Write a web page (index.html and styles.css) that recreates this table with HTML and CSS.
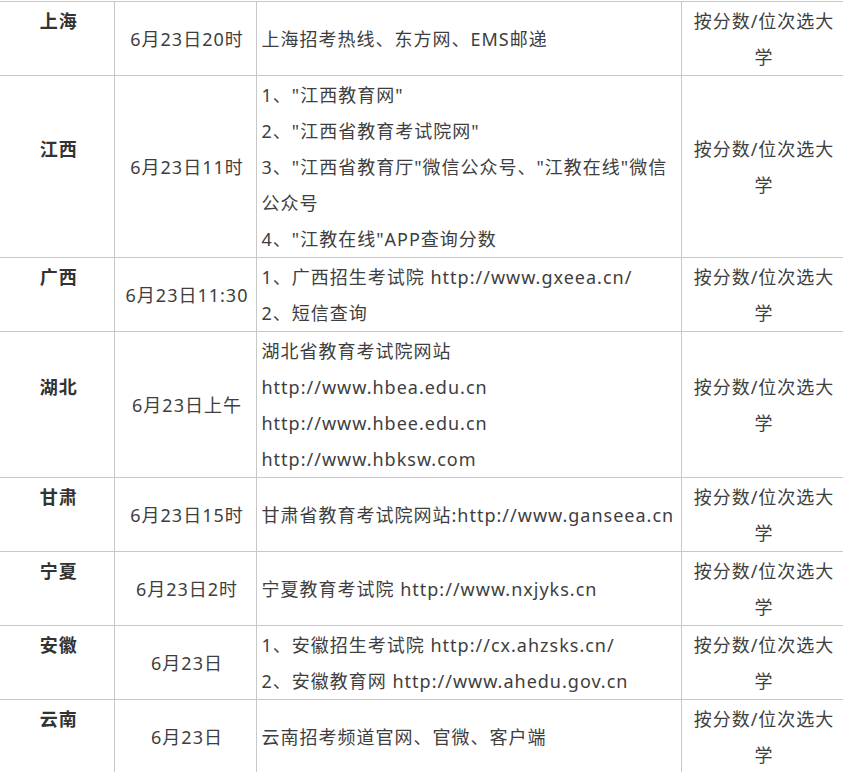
FILE: index.html
```html
<!DOCTYPE html>
<html lang="zh-CN">
<head>
<meta charset="utf-8">
<title>高考查分</title>
<link rel="stylesheet" href="styles.css">
</head>
<body>
<table class="score-table">
  <colgroup>
    <col class="c-prov">
    <col class="c-time">
    <col class="c-src">
    <col class="c-res">
  </colgroup>
  <tbody>
    <tr>
      <td class="prov"><div class="prov-name">上海</div><div class="prov-gap"></div></td>
      <td class="time">6月23日20时</td>
      <td class="src">上海招考热线、东方网、EMS邮递</td>
      <td class="res">按分数/位次选大学</td>
    </tr>
    <tr>
      <td class="prov"><div class="prov-name">江西</div><div class="prov-gap"></div></td>
      <td class="time">6月23日11时</td>
      <td class="src">
        <div>1、"江西教育网"</div>
        <div>2、"江西省教育考试院网"</div>
        <div>3、"江西省教育厅"微信公众号、"江教在线"微信公众号</div>
        <div>4、"江教在线"APP查询分数</div>
      </td>
      <td class="res">按分数/位次选大学</td>
    </tr>
    <tr>
      <td class="prov"><div class="prov-name">广西</div><div class="prov-gap"></div></td>
      <td class="time">6月23日11:30</td>
      <td class="src">
        <div>1、广西招生考试院 http://www.gxeea.cn/</div>
        <div>2、短信查询</div>
      </td>
      <td class="res">按分数/位次选大学</td>
    </tr>
    <tr>
      <td class="prov"><div class="prov-name">湖北</div><div class="prov-gap"></div></td>
      <td class="time">6月23日上午</td>
      <td class="src">
        <div>湖北省教育考试院网站</div>
        <div>http://www.hbea.edu.cn</div>
        <div>http://www.hbee.edu.cn</div>
        <div>http://www.hbksw.com</div>
      </td>
      <td class="res">按分数/位次选大学</td>
    </tr>
    <tr>
      <td class="prov"><div class="prov-name">甘肃</div><div class="prov-gap"></div></td>
      <td class="time">6月23日15时</td>
      <td class="src">甘肃省教育考试院网站:http://www.ganseea.cn</td>
      <td class="res">按分数/位次选大学</td>
    </tr>
    <tr>
      <td class="prov"><div class="prov-name">宁夏</div><div class="prov-gap"></div></td>
      <td class="time">6月23日2时</td>
      <td class="src">宁夏教育考试院 http://www.nxjyks.cn</td>
      <td class="res">按分数/位次选大学</td>
    </tr>
    <tr>
      <td class="prov"><div class="prov-name">安徽</div><div class="prov-gap"></div></td>
      <td class="time">6月23日</td>
      <td class="src">
        <div>1、安徽招生考试院 http://cx.ahzsks.cn/</div>
        <div>2、安徽教育网 http://www.ahedu.gov.cn</div>
      </td>
      <td class="res">按分数/位次选大学</td>
    </tr>
    <tr>
      <td class="prov"><div class="prov-name">云南</div><div class="prov-gap"></div></td>
      <td class="time">6月23日</td>
      <td class="src">云南招考频道官网、官微、客户端</td>
      <td class="res">按分数/位次选大学</td>
    </tr>
  </tbody>
</table>
</body>
</html>
```

FILE: styles.css
```css
html, body {
  margin: 0;
  padding: 0;
  background: #ffffff;
}

body {
  font-family: "Noto Sans", "Noto Sans CJK SC", sans-serif;
  font-size: 18px;
  letter-spacing: 1px;
  line-height: 36px;
  color: #3e3e3e;
}

.score-table {
  border-collapse: collapse;
  table-layout: fixed;
  width: 843px;
  margin-top: 1px;
}

.c-prov { width: 114px; }
.c-time { width: 142px; }
.c-src { width: 425px; }
.c-res { width: 162px; }

.score-table td {
  border: 1px solid #c8c8c8;
  padding: 1px 2px 0 6px;
  vertical-align: middle;
  word-break: break-all;
}

.score-table td.prov {
  border-left: none;
  text-align: center;
}

.prov-name {
  font-weight: bold;
  color: #333333;
}

.prov-gap {
  height: 36px;
}

.score-table td.time {
  text-align: center;
  white-space: nowrap;
}

.score-table td.src {
  text-align: left;
  padding-left: 5px;
}

.score-table td.res {
  text-align: center;
}
```
